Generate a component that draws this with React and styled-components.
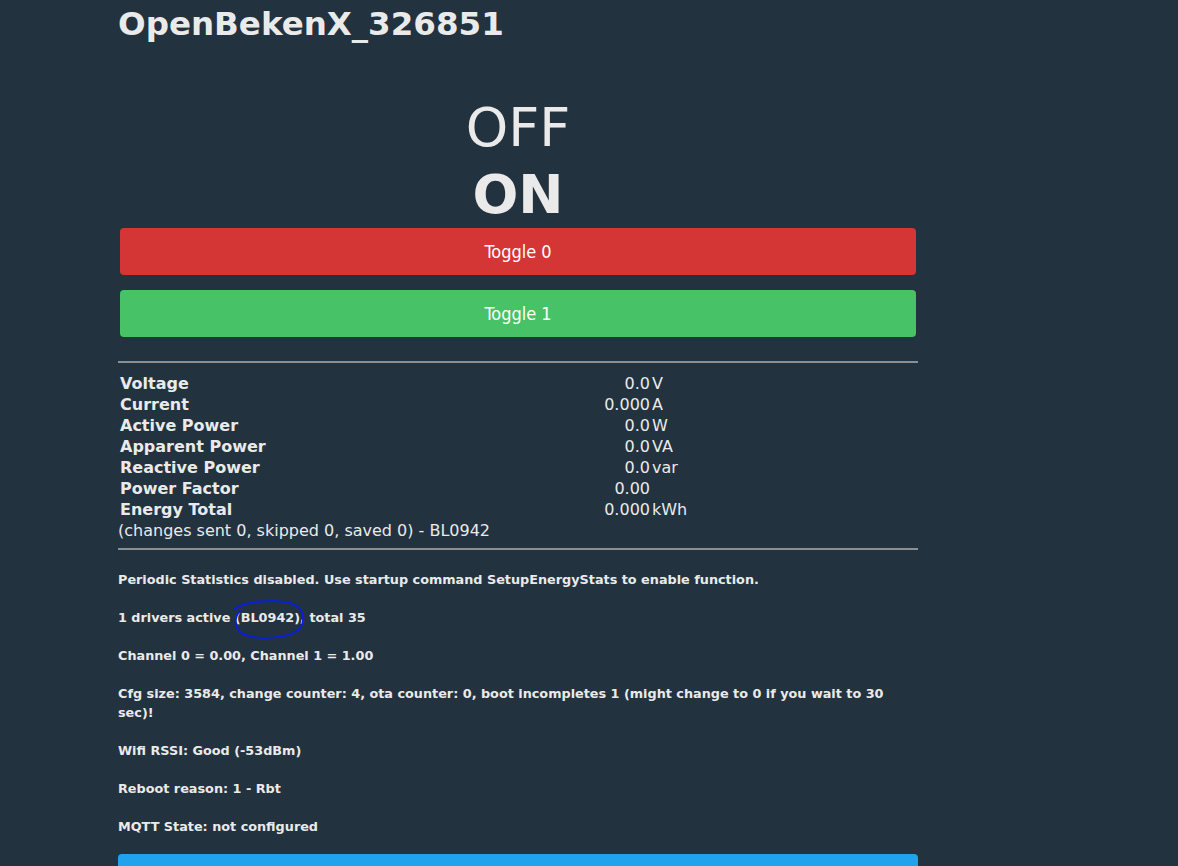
import React from 'react'
import styled, { createGlobalStyle } from 'styled-components'

const GlobalStyle = createGlobalStyle`
    html, body {
        margin:0;
        padding:0;
        background:#22323f;
    }
    body {
        font-family:"DejaVu Sans", Verdana, sans-serif;
        color:#eaeaea;
    }
`

const energy = [
    { name: 'Voltage', value: '0.0', unit: 'V' },
    { name: 'Current', value: '0.000', unit: 'A' },
    { name: 'Active Power', value: '0.0', unit: 'W' },
    { name: 'Apparent Power', value: '0.0', unit: 'VA' },
    { name: 'Reactive Power', value: '0.0', unit: 'var' },
    { name: 'Power Factor', value: '0.00', unit: '' },
    { name: 'Energy Total', value: '0.000', unit: 'kWh' },
]

const App = () => {
    return (
        <>
            <GlobalStyle />
            <Page>
                <Title>OpenBekenX_326851</Title>
                <StateBlock>
                    <State>OFF</State>
                    <State $on>ON</State>
                </StateBlock>
                <ToggleButton $color="#d43535">Toggle 0</ToggleButton>
                <ToggleButton $color="#47c266">Toggle 1</ToggleButton>
                <Rule $top={9} />
                <EnergyTable>
                    {energy.map(row => (
                        <React.Fragment key={row.name}>
                            <Label>{row.name}</Label>
                            <Value>{row.value}</Value>
                            <Unit>{row.unit}</Unit>
                        </React.Fragment>
                    ))}
                </EnergyTable>
                <Note>(changes sent 0, skipped 0, saved 0) - BL0942</Note>
                <Rule $top={7} />
                <Stats>
                    <p>Periodic Statistics disabled. Use startup command SetupEnergyStats to enable function.</p>
                    <p>
                        1 drivers active <Marked>(BL0942)<Scribble viewBox="0 0 72 40"><path d="M1 9 C 14 1, 40 -1, 57 3 C 71 6, 74 22, 65 30 C 56 38, 24 41, 10 34 C 2 30, 0 18, 7 11" fill="none" stroke="#0a1fd8" strokeWidth="2" strokeLinecap="round" /></Scribble></Marked>, total 35
                    </p>
                    <p>Channel 0 = 0.00, Channel 1 = 1.00</p>
                    <p>Cfg size: 3584, change counter: 4, ota counter: 0, boot incompletes 1 (might change to 0 if you wait to 30 sec)!</p>
                    <p>Wifi RSSI: Good (-53dBm)</p>
                    <p>Reboot reason: 1 - Rbt</p>
                    <p>MQTT State: not configured</p>
                </Stats>
                <MenuButton>Config</MenuButton>
            </Page>
        </>
    )
}

const Page = styled.div`
    width:800px;
    margin-left:118px;
    display:flex;
    flex-direction:column;
`

const Title = styled.h1`
    margin:4px 0 0 0;
    font-size:32.5px;
    line-height:40px;
    font-weight:700;
    color:#eaeaea;
`

const StateBlock = styled.div`
    margin-top:50px;
    display:flex;
    flex-direction:column;
    align-items:center;
`

const State = styled.div`
    font-size:54px;
    line-height:67px;
    font-weight:${p => (p.$on ? 700 : 400)};
    color:#eaeaea;
`

const ToggleButton = styled.div`
    margin:0 2px 15px;
    height:47px;
    border-radius:4px;
    background:${p => p.$color};
    color:#fff;
    font-family:"DejaVu Sans Condensed", "DejaVu Sans", sans-serif;
    font-size:18px;
    display:flex;
    align-items:center;
    justify-content:center;
`

const Rule = styled.div`
    margin-top:${p => p.$top}px;
    height:2px;
    background:#8a8f94;
`

const EnergyTable = styled.div`
    margin-top:10px;
    display:grid;
    grid-template-columns:420px 108px 1fr;
    column-gap:2px;
    font-size:16px;
    line-height:21px;
    padding-left:2px;
`

const Label = styled.div`
    font-weight:700;
`

const Value = styled.div`
    text-align:right;
`

const Unit = styled.div``

const Note = styled.div`
    font-size:16px;
    line-height:21px;
`

const Stats = styled.div`
    margin-top:20px;
    font-size:12.8px;
    font-weight:700;
    line-height:19px;
    p{
        margin:0 0 19px 0;
    }
    p:last-child{
        margin-bottom:18px;
    }
`

const Marked = styled.span`
    position:relative;
`

const Scribble = styled.svg`
    position:absolute;
    left:-2px;
    top:-10px;
    width:72px;
    height:40px;
    overflow:visible;
    pointer-events:none;
`

const MenuButton = styled.div`
    height:47px;
    border-radius:4px;
    background:#1fa3ec;
    color:#fff;
    font-size:18px;
    display:flex;
    align-items:center;
    justify-content:center;
`

export default App
